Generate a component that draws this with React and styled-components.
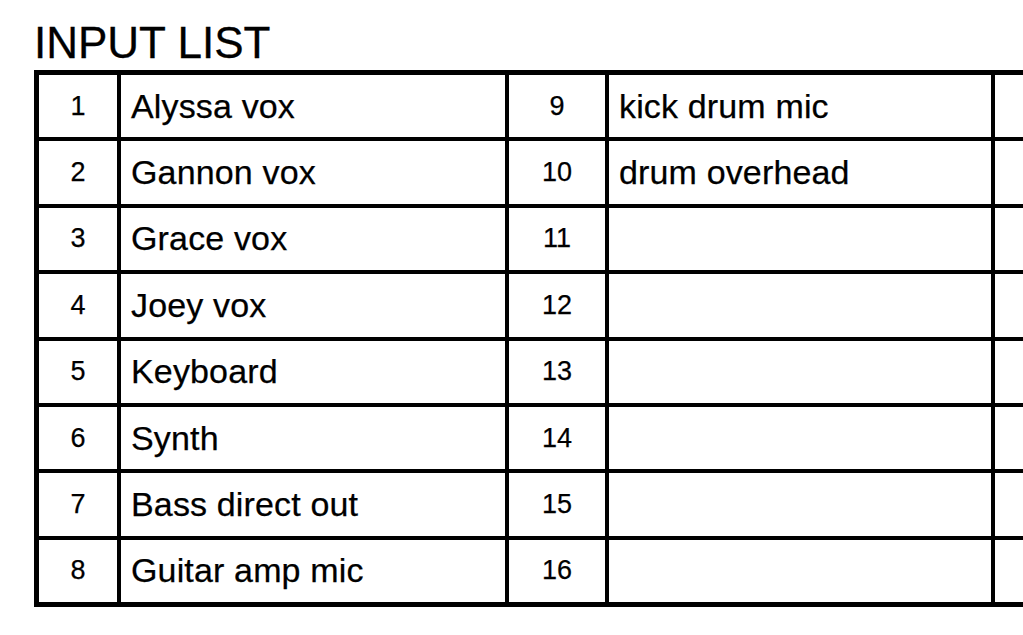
import React from 'react';
import styled, { createGlobalStyle } from 'styled-components';

const GlobalStyle = createGlobalStyle`
  html, body {
    margin: 0;
    padding: 0;
    background: #ffffff;
    overflow: hidden;
  }
  body {
    font-family: "Liberation Sans", Arial, sans-serif;
    color: #000000;
  }
`;

const Page = styled.div`
  padding: 21px 0 0 34px;
  width: 1023px;
  height: 635px;
  box-sizing: border-box;
  overflow: hidden;
`;

const Title = styled.h1`
  margin: 0 0 6px 0;
  font-size: 44px;
  line-height: 43px;
  font-weight: 400;
  -webkit-text-stroke: 0.3px #000;
`;

const Grid = styled.div`
  display: grid;
  width: max-content;
  grid-template-columns: 78px 384px 96px 382px 96px 382px;
  grid-template-rows: repeat(8, 62.4px);
  grid-auto-flow: column;
  gap: 4px;
  padding: 5px;
  background: #000000;
`;

const Cell = styled.div`
  background: #ffffff;
  display: flex;
  align-items: center;
  justify-content: ${(p) => (p.$num ? 'center' : 'flex-start')};
  padding-left: ${(p) => (p.$num ? '0' : '10px')};
  font-size: ${(p) => (p.$num ? '27px' : '34px')};
  letter-spacing: ${(p) => (p.$num ? '0' : '0.15px')};
  -webkit-text-stroke: 0.25px #000;
  white-space: nowrap;
`;

const channels = [
  'Alyssa vox',
  'Gannon vox',
  'Grace vox',
  'Joey vox',
  'Keyboard',
  'Synth',
  'Bass direct out',
  'Guitar amp mic',
  'kick drum mic',
  'drum overhead',
];

// third bank runs past the right edge of the page, so only its border shows
const banks = [0, 1, 2];

export default function App() {
  return (
    <>
      <GlobalStyle />
      <Page>
        <Title>INPUT LIST</Title>
        <Grid>
          {banks.map((bank) =>
            [0, 1].map((kind) =>
              Array.from({ length: 8 }, (_, i) => {
                const n = bank * 8 + i + 1;
                const visible = bank < 2;
                return kind === 0 ? (
                  <Cell key={`n${n}`} $num>
                    {visible ? n : ''}
                  </Cell>
                ) : (
                  <Cell key={`t${n}`}>{channels[n - 1] || ''}</Cell>
                );
              })
            )
          )}
        </Grid>
      </Page>
    </>
  );
}
